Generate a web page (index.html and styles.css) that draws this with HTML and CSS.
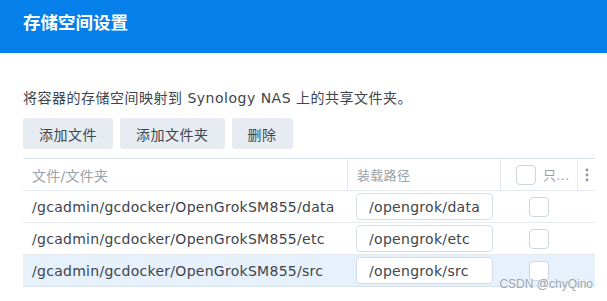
FILE: index.html
```html
<!DOCTYPE html>
<html lang="zh-CN">
<head>
    <meta charset="UTF-8">
    <meta name="viewport" content="width=device-width, initial-scale=1.0">
    <title>存储空间设置</title>
    <link rel="stylesheet" href="styles.css">
</head>
<body>
    <div class="header">存储空间设置</div>

    <div class="content">
        <p class="desc">将容器的存储空间映射到 Synology NAS 上的共享文件夹。</p>

        <div class="toolbar">
            <button class="btn">添加文件</button>
            <button class="btn">添加文件夹</button>
            <button class="btn">删除</button>
        </div>

        <div class="grid">
            <div class="row head">
                <div class="cell c-file">文件/文件夹</div>
                <div class="cell c-mount">装载路径</div>
                <div class="cell c-ro"><span class="check"></span><span>只...</span></div>
                <div class="cell c-menu">
                    <svg width="4" height="14" viewBox="0 0 4 14"><circle cx="2" cy="2" r="1.4" fill="#8a97a6"/><circle cx="2" cy="7" r="1.4" fill="#8a97a6"/><circle cx="2" cy="12" r="1.4" fill="#8a97a6"/></svg>
                </div>
            </div>
            <div class="row">
                <div class="cell c-file">/gcadmin/gcdocker/OpenGrokSM855/data</div>
                <div class="cell c-mount"><input class="path" type="text" value="/opengrok/data"></div>
                <div class="cell c-ro center"><span class="check"></span></div>
                <div class="cell c-menu"></div>
            </div>
            <div class="row">
                <div class="cell c-file">/gcadmin/gcdocker/OpenGrokSM855/etc</div>
                <div class="cell c-mount"><input class="path" type="text" value="/opengrok/etc"></div>
                <div class="cell c-ro center"><span class="check"></span></div>
                <div class="cell c-menu"></div>
            </div>
            <div class="row selected">
                <div class="cell c-file">/gcadmin/gcdocker/OpenGrokSM855/src</div>
                <div class="cell c-mount"><input class="path" type="text" value="/opengrok/src"></div>
                <div class="cell c-ro center"><span class="check"></span></div>
                <div class="cell c-menu"></div>
            </div>
        </div>
    </div>

    <div class="watermark">CSDN @chyQino</div>
</body>
</html>
```

FILE: styles.css
```css
body {
    font-family: "DejaVu Sans", "Noto Sans CJK SC", sans-serif;
    margin: 0;
    background: #fff;
    color: #3d454d;
    overflow: hidden;
}
.header {
    height: 53px;
    background: #0580ea;
    color: #fff;
    font-size: 17.5px;
    font-weight: bold;
    padding: 9px 0 0 23px;
    box-sizing: border-box;
}
.content {
    padding: 0 12px 0 23px;
}
.desc {
    margin: 35px 0 0;
    font-size: 14px;
    letter-spacing: 0.5px;
    line-height: 20px;
}
.toolbar {
    display: flex;
    gap: 7px;
    margin-top: 10px;
}
.btn {
    font-family: inherit;
    font-size: 14px;
    letter-spacing: 0.5px;
    color: #3d454d;
    height: 31px;
    padding: 0 16px;
    border: none;
    border-radius: 3px;
    background: #e6ecf2;
}
.grid {
    margin-top: 9px;
    border-top: 1px solid #d8e2ec;
}
.row {
    display: flex;
    height: 32px;
    border-bottom: 1px solid #e3e9ef;
    box-sizing: border-box;
}
.row.head {
    color: #9aa1a8;
    font-size: 13px;
    letter-spacing: 0.3px;
}
.row.selected {
    background: #e6f1fc;
    border-bottom-color: #d8e2ec;
}
.cell {
    display: flex;
    align-items: center;
    box-sizing: border-box;
}
.c-file {
    width: 324px;
    padding-left: 9px;
    font-size: 14px;
    letter-spacing: 0.28px;
    white-space: nowrap;
}
.c-mount {
    width: 153px;
    padding-left: 9px;
}
.c-ro {
    width: 77px;
    padding-left: 15px;
    gap: 7px;
}
.c-ro.center {
    padding-left: 29px;
}
.c-menu {
    width: 18px;
    justify-content: center;
}
.row.head .c-mount,
.row.head .c-ro,
.row.head .c-menu {
    border-left: 1px solid #e3e9ef;
}
.check {
    display: inline-block;
    width: 18px;
    height: 18px;
    border: 1px solid #cdd6df;
    border-radius: 4px;
    background: #fff;
}
.path {
    font-family: inherit;
    font-size: 14px;
    letter-spacing: 0.3px;
    color: #3d454d;
    width: 137px;
    height: 27px;
    box-sizing: border-box;
    padding: 0 0 0 12px;
    border: 1px solid #d5dee7;
    border-radius: 4px;
    background: #fff;
}
.watermark {
    position: absolute;
    right: 14px;
    bottom: 10px;
    font-family: "Liberation Sans", sans-serif;
    font-size: 12px;
    color: #a0a4a8;
    text-shadow: 0 0 2px #fff;
}
```
